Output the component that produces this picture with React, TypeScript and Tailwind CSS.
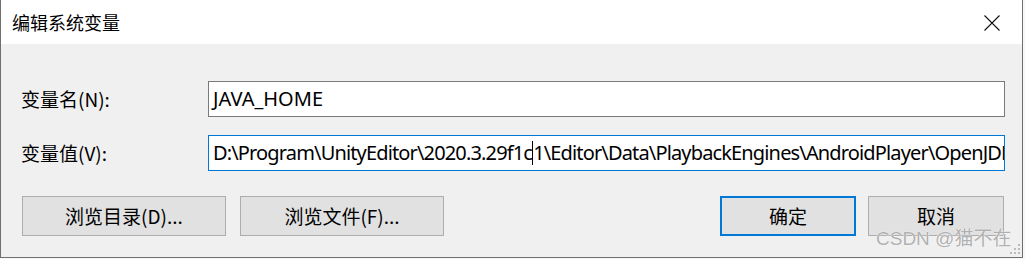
import React from "react";

const font = { fontFamily: '"Noto Sans", "Noto Sans CJK SC", sans-serif' };
const cjk = { fontFamily: '"Noto Sans CJK SC", sans-serif' };

export default function App() {
  return (
    <div className="w-[1025px] h-[259px] bg-[#f7f7f7] overflow-hidden relative" style={font}>
      <div className="w-[1023px] h-[258px] border-l border-r border-b border-[#6f6f6f] bg-[#f0f0f0] flex flex-col">
        <div className="h-[44px] bg-white flex items-center justify-between pl-[11px] pr-[22px]">
          <span className="text-[18px] text-black leading-none" style={cjk}>编辑系统变量</span>
          <svg width="16" height="16" viewBox="0 0 16 16" className="mt-[2px]">
            <path d="M0.5 0.5 L15.5 15.5 M15.5 0.5 L0.5 15.5" stroke="#111" strokeWidth="1.1" fill="none" />
          </svg>
        </div>
        <div className="flex flex-col pl-[20px] pr-[17px] pt-[37px] gap-[18px]">
          <div className="flex items-center h-[36px]">
            <span className="w-[187px] text-[19px] text-black" style={cjk}>变量名(N):</span>
            <div className="flex-1 h-[36px] border border-[#7a7a7a] bg-white flex items-center pl-[4px] text-[20px] text-black overflow-hidden whitespace-nowrap">
              JAVA_HOME
            </div>
          </div>
          <div className="flex items-center h-[36px]">
            <span className="w-[187px] text-[19px] text-black" style={cjk}>变量值(V):</span>
            <div className="flex-1 h-[36px] border border-[#0078d7] bg-white flex items-center pl-[4px] text-[20px] text-black overflow-hidden whitespace-nowrap tracking-[-0.85px]">
              <span>D:\Program\UnityEditor\2020.3.29f1c</span>
              <span className="inline-block w-[1px] h-[24px] bg-[#000] shrink-0" />
              <span>1\Editor\Data\PlaybackEngines\AndroidPlayer\OpenJDK</span>
            </div>
          </div>
        </div>
        <div className="flex items-center pl-[21px] pr-[18px] mt-[25px]">
          <button className="w-[204px] h-[40px] border border-[#adadad] bg-[#e1e1e1] text-[19px] text-black" style={cjk}>浏览目录(D)...</button>
          <button className="w-[204px] h-[40px] border border-[#adadad] bg-[#e1e1e1] text-[19px] text-black ml-[14px]" style={cjk}>浏览文件(F)...</button>
          <div className="flex-1" />
          <button className="w-[136px] h-[40px] border-2 border-[#0078d7] bg-[#e1e1e1] text-[19px] text-black" style={cjk}>确定</button>
          <button className="w-[136px] h-[40px] border border-[#adadad] bg-[#e1e1e1] text-[19px] text-black ml-[12px]" style={cjk}>取消</button>
        </div>
      </div>
      <div className="absolute left-[876px] top-[229px] text-[19px] text-[#b0b0b0] leading-none whitespace-nowrap" style={{ fontFamily: '"Liberation Sans", "Noto Sans CJK SC", sans-serif', textShadow: "0 0 1px #fff, 0 0 1px #fff" }}>CSDN @猫不在</div>
      <svg className="absolute left-[1010px] top-[244px]" width="11" height="11" viewBox="0 0 11 11">
        <rect x="8" y="0" width="2" height="2" fill="#bcbcbc" />
        <rect x="4" y="4" width="2" height="2" fill="#bcbcbc" />
        <rect x="8" y="4" width="2" height="2" fill="#bcbcbc" />
        <rect x="0" y="8" width="2" height="2" fill="#bcbcbc" />
        <rect x="4" y="8" width="2" height="2" fill="#bcbcbc" />
        <rect x="8" y="8" width="2" height="2" fill="#bcbcbc" />
      </svg>
    </div>
  );
}
